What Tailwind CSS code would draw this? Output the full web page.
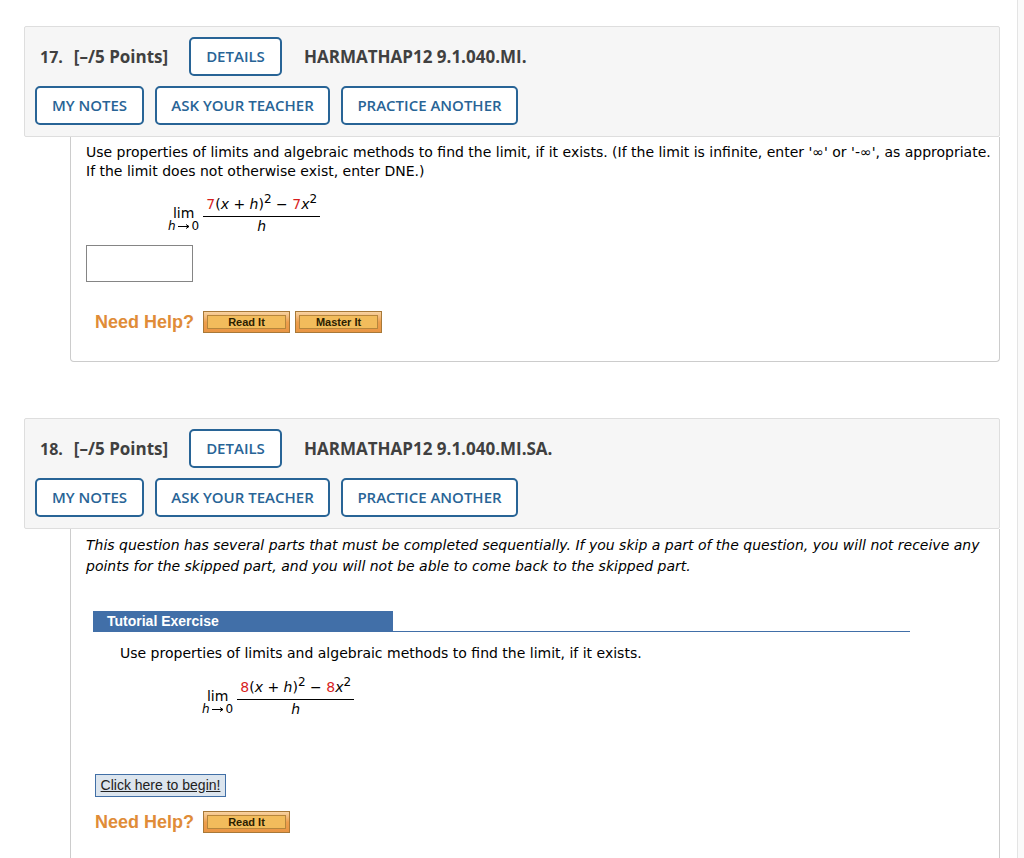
<!DOCTYPE html>
<html lang="en">
<head>
<meta charset="utf-8">
<meta name="viewport" content="width=device-width, initial-scale=1">
<title>Assignment questions</title>
<script src="https://cdn.jsdelivr.net/npm/@tailwindcss/browser@4"></script>
</head>
<body class="bg-[#fafafa] text-black font-['Verdana','DejaVu_Sans',sans-serif] text-[14px]">
<main class="mr-1.5 flex min-h-screen flex-col border-r border-[#e4e4e4] bg-white pt-[26px] pr-[17px] pl-6">

  <section>
    <header class="flex flex-col gap-2.5 rounded-xs border border-[#dedede] bg-[#f6f6f6] px-2.5 pt-2.5 pb-[11px] font-['Open_Sans',sans-serif]">
      <div class="flex items-center pl-[5px] text-[17px] font-bold text-[#404040]">
        <h2 class="w-[149px] whitespace-nowrap"><span class="mr-[11px] text-base">17.</span>[–/5 Points]</h2>
        <button class="h-[39px] w-[93px] rounded-[5px] border-2 border-[#286496] bg-white text-[15px] font-semibold text-[#286496]">DETAILS</button>
        <span class="ml-[22px]">HARMATHAP12 9.1.040.MI.</span>
      </div>
      <div class="flex gap-[11px] text-[15px] font-semibold text-[#286496]">
        <button class="h-[39px] w-[109px] rounded-[5px] border-2 border-[#286496] bg-white">MY NOTES</button>
        <button class="h-[39px] w-[175px] rounded-[5px] border-2 border-[#286496] bg-white">ASK YOUR TEACHER</button>
        <button class="h-[39px] w-[177px] rounded-[5px] border-2 border-[#286496] bg-white">PRACTICE ANOTHER</button>
      </div>
    </header>
    <div class="ml-[46px] rounded-b border border-t-0 border-[#cccccc] px-[15px] pt-1.5 pb-[27px]">
      <p class="-mr-3.5 leading-[19px]">Use properties of limits and algebraic methods to find the limit, if it exists. (If the limit is infinite, enter '∞' or '-∞', as appropriate. If the limit does not otherwise exist, enter DNE.)</p>
      <div class="mt-[15px] ml-[82px] flex items-start gap-1 leading-4">
        <div class="flex flex-col items-center pt-2.5">
          <span class="leading-[14px]">lim</span>
          <span class="flex items-center text-[12px] leading-[12px]"><i>h</i><svg class="mx-0.5" width="12" height="7" viewBox="0 0 12 7" fill="none" stroke="currentColor"><path d="M0 3.5h11M8 1.5l3 2-3 2"/></svg>0</span>
        </div>
        <div class="flex flex-col items-center">
          <div class="border-b border-black px-[3px] pb-1"><span class="text-[#d81e1e]">7</span>(<i>x</i> + <i>h</i>)<sup class="text-[12px]">2</sup> − <span class="text-[#d81e1e]">7</span><i>x</i><sup class="text-[12px]">2</sup></div>
          <i class="mt-px">h</i>
        </div>
      </div>
      <input type="text" aria-label="Limit answer" class="mt-[11px] block h-[37px] w-[107px] border border-[#858585] bg-white px-2">
      <div class="mt-7 ml-[9px] flex items-center font-['Liberation_Sans',sans-serif]">
        <span class="w-[108px] text-lg leading-6 font-bold text-[#e08c38]">Need Help?</span>
        <button class="h-[22px] w-[87px] border border-[#a87938] bg-linear-to-b from-[#f8d3a1] via-[#ed9f4d] to-[#e99544] p-[3px]"><span class="flex h-full items-center justify-center border border-[#b6863c] bg-[#f2bc5c] text-[11px] font-bold text-[#2b2000]">Read It</span></button>
        <button class="ml-[5px] h-[22px] w-[87px] border border-[#a87938] bg-linear-to-b from-[#f8d3a1] via-[#ed9f4d] to-[#e99544] p-[3px]"><span class="flex h-full items-center justify-center border border-[#b6863c] bg-[#f2bc5c] text-[11px] font-bold text-[#2b2000]">Master It</span></button>
      </div>
    </div>
  </section>

  <section class="mt-14 flex grow flex-col">
    <header class="flex flex-col gap-2.5 rounded-xs border border-[#dedede] bg-[#f6f6f6] px-2.5 pt-2.5 pb-[11px] font-['Open_Sans',sans-serif]">
      <div class="flex items-center pl-[5px] text-[17px] font-bold text-[#404040]">
        <h2 class="w-[149px] whitespace-nowrap"><span class="mr-[11px] text-base">18.</span>[–/5 Points]</h2>
        <button class="h-[39px] w-[93px] rounded-[5px] border-2 border-[#286496] bg-white text-[15px] font-semibold text-[#286496]">DETAILS</button>
        <span class="ml-[22px]">HARMATHAP12 9.1.040.MI.SA.</span>
      </div>
      <div class="flex gap-[11px] text-[15px] font-semibold text-[#286496]">
        <button class="h-[39px] w-[109px] rounded-[5px] border-2 border-[#286496] bg-white">MY NOTES</button>
        <button class="h-[39px] w-[175px] rounded-[5px] border-2 border-[#286496] bg-white">ASK YOUR TEACHER</button>
        <button class="h-[39px] w-[177px] rounded-[5px] border-2 border-[#286496] bg-white">PRACTICE ANOTHER</button>
      </div>
    </header>
    <div class="ml-[46px] grow border-x border-[#cccccc] px-[15px] pt-1.5 pb-4">
      <p class="leading-[21px] italic">This question has several parts that must be completed sequentially. If you skip a part of the question, you will not receive any points for the skipped part, and you will not be able to come back to the skipped part.</p>
      <div class="mt-[34px] mr-[74px] ml-[7px] border-b border-[#416fa8]">
        <h3 class="h-5 w-[300px] bg-[#416fa8] pl-3.5 font-['Liberation_Sans',sans-serif] leading-5 font-bold text-white">Tutorial Exercise</h3>
      </div>
      <div class="ml-[34px] pt-3">
        <p class="leading-[19px]">Use properties of limits and algebraic methods to find the limit, if it exists.</p>
        <div class="mt-4 ml-[82px] flex items-start gap-1 leading-4">
          <div class="flex flex-col items-center pt-2.5">
            <span class="leading-[14px]">lim</span>
            <span class="flex items-center text-[12px] leading-[12px]"><i>h</i><svg class="mx-0.5" width="12" height="7" viewBox="0 0 12 7" fill="none" stroke="currentColor"><path d="M0 3.5h11M8 1.5l3 2-3 2"/></svg>0</span>
          </div>
          <div class="flex flex-col items-center">
            <div class="border-b border-black px-[3px] pb-1"><span class="text-[#d81e1e]">8</span>(<i>x</i> + <i>h</i>)<sup class="text-[12px]">2</sup> − <span class="text-[#d81e1e]">8</span><i>x</i><sup class="text-[12px]">2</sup></div>
            <i class="mt-px">h</i>
          </div>
        </div>
      </div>
      <a href="#" class="mt-[57px] ml-[9px] flex h-[23px] w-[131px] items-center justify-center border border-[#416fa6] bg-[#dce5ee] font-['Liberation_Sans',sans-serif] whitespace-nowrap text-[#222222] underline">Click here to begin!</a>
      <div class="mt-[13px] ml-[9px] flex items-center font-['Liberation_Sans',sans-serif]">
        <span class="w-[108px] text-lg leading-6 font-bold text-[#e08c38]">Need Help?</span>
        <button class="h-[22px] w-[87px] border border-[#a87938] bg-linear-to-b from-[#f8d3a1] via-[#ed9f4d] to-[#e99544] p-[3px]"><span class="flex h-full items-center justify-center border border-[#b6863c] bg-[#f2bc5c] text-[11px] font-bold text-[#2b2000]">Read It</span></button>
      </div>
    </div>
  </section>
</main>
</body>
</html>
